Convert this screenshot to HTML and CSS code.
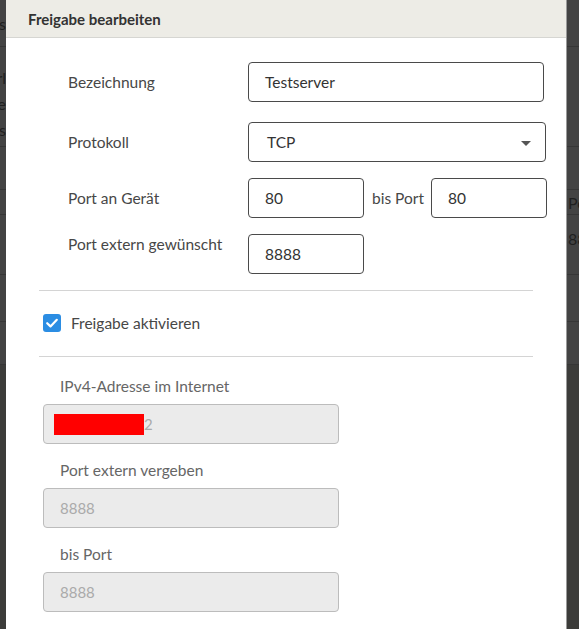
FILE: index.html
```html
<!DOCTYPE html>
<html lang="de">
<head>
<meta charset="utf-8">
<title>Freigabe bearbeiten</title>
<link rel="stylesheet" href="styles.css">
</head>
<body>
<div class="page">
  <div class="bg-table">
    <div class="bg-row h47"><div class="bg-left"><span>Aktions</span></div><div class="bg-mid"></div><div class="bg-right"></div></div>
    <div class="bg-row h100 multi"><div class="bg-left tall"><span class="l1">Testserverl</span><span class="l2">Freigabe</span><span class="l3">Gerätens</span></div><div class="bg-mid"></div><div class="bg-right"></div></div>
    <div class="bg-row h43"><div class="bg-left"></div><div class="bg-mid"></div><div class="bg-right"></div></div>
    <div class="bg-row h25"><div class="bg-left"></div><div class="bg-mid"></div><div class="bg-right"><span>Port</span></div></div>
    <div class="bg-row h60"><div class="bg-left"></div><div class="bg-mid"></div><div class="bg-right top"><span>8888</span></div></div>
    <div class="bg-row h47"><div class="bg-left"></div><div class="bg-mid"></div><div class="bg-right"></div></div>
    <div class="bg-row h43"><div class="bg-left"></div><div class="bg-mid"></div><div class="bg-right"></div></div>
  </div>
  <div class="bg-footer"></div>
</div>

<div class="modal">
  <div class="modal-header">Freigabe bearbeiten</div>
  <div class="modal-body">
    <div class="form-top">
      <div class="row first">
        <label class="label">Bezeichnung</label>
        <div class="field wide">Testserver</div>
      </div>
      <div class="row">
        <label class="label">Protokoll</label>
        <div class="field select">TCP<span class="caret"></span></div>
      </div>
      <div class="row">
        <label class="label">Port an Gerät</label>
        <div class="field port">80</div>
        <span class="inline-label">bis Port</span>
        <div class="field port">80</div>
      </div>
      <div class="row top-align">
        <label class="label">Port extern gewünscht</label>
        <div class="field port">8888</div>
      </div>
    </div>
    <hr class="divider">
    <div class="check-row">
      <span class="checkbox">
        <svg width="18" height="18" viewBox="0 0 18 18"><path d="M4.2 9.2 L7.5 12.4 L13.8 5.8" fill="none" stroke="#fff" stroke-width="2.2" stroke-linecap="round" stroke-linejoin="round"/></svg>
      </span>
      <span class="check-label">Freigabe aktivieren</span>
    </div>
    <hr class="divider">
    <div class="form-bottom">
      <div class="stack">
        <div class="stack-label">IPv4-Adresse im Internet</div>
        <div class="field disabled"><span class="redact"></span>2</div>
      </div>
      <div class="stack">
        <div class="stack-label">Port extern vergeben</div>
        <div class="field disabled">8888</div>
      </div>
      <div class="stack">
        <div class="stack-label">bis Port</div>
        <div class="field disabled">8888</div>
      </div>
    </div>
  </div>
</div>
</body>
</html>
```
FILE: styles.css
```css
* { box-sizing: border-box; }
html, body { margin: 0; padding: 0; }
body {
  width: 579px;
  height: 629px;
  overflow: hidden;
  background: #3c3c3a;
  font-family: Lato, "Open Sans", "Liberation Sans", sans-serif;
  position: relative;
}

/* dimmed background page */
.page { width: 579px; }
.bg-table { background: #434343; }
.bg-row {
  display: flex;
  border-bottom: 1px solid #363636;
  font-size: 16px;
  color: #1f1f1f;
}
.h47 { height: 47px; }
.h100 { height: 100px; }
.h43 { height: 43px; }
.h25 { height: 25px; }
.h60 { height: 60px; }
.bg-left {
  width: 6px;
  overflow: hidden;
  display: flex;
  justify-content: flex-end;
  align-items: center;
  white-space: nowrap;
}
.bg-left.tall {
  flex-direction: column;
  align-items: flex-end;
  justify-content: flex-start;
  padding-top: 18px;
  line-height: 26px;
}
.bg-left.tall span { display: block; }
.bg-mid { width: 560px; }
.bg-right {
  width: 13px;
  overflow: hidden;
  white-space: nowrap;
  display: flex;
  align-items: center;
  padding-left: 2px;
}
.bg-right.top { align-items: flex-start; padding-top: 14px; }
.bg-footer { height: 264px; background: #3c3c3a; }

/* modal */
.modal {
  position: absolute;
  left: 6px;
  top: 0;
  width: 560px;
  height: 629px;
  overflow: hidden;
  background: #fff;
  box-shadow: 1px 0 0 #9a9a9a;
  color: #444;
}
.modal-header {
  height: 38px;
  background: #edece6;
  border-bottom: 1px solid #d6d6d2;
  padding-left: 22px;
  display: flex;
  align-items: center;
  font-size: 15px;
  font-weight: 700;
  color: #333;
}
.form-top {
  padding: 24px 0 0 62px;
  display: flex;
  flex-direction: column;
  gap: 16px;
}
.row {
  display: flex;
  align-items: center;
}
.row.first { margin-bottom: 4px; }
.label {
  width: 180px;
  font-size: 15.5px;
  color: #474747;
}
.row.top-align { align-items: flex-start; }
.row.top-align .label { padding-top: 1px; }
.field {
  height: 40px;
  border: 1px solid #4a4a4a;
  border-radius: 4px;
  display: flex;
  align-items: center;
  padding-left: 16px;
  font-size: 15.5px;
  color: #333;
}
.field.wide { width: 296px; }
.field.select { width: 298px; position: relative; padding-left: 18px; }
.caret {
  position: absolute;
  right: 14px;
  top: 18px;
  width: 0;
  height: 0;
  border-left: 5px solid transparent;
  border-right: 5px solid transparent;
  border-top: 5px solid #555;
}
.field.port { width: 116px; }
.inline-label {
  font-size: 15.5px;
  color: #474747;
  margin: 0 7px 0 8px;
}
.divider {
  margin: 16px 0 0 33px;
  width: 494px;
  border: 0;
  border-top: 1px solid #d4d4d4;
  height: 0;
}
.check-row {
  display: flex;
  align-items: center;
  padding: 23px 0 24px 37px;
}
.check-row + .divider { margin-top: 0; }
.checkbox {
  width: 18px;
  height: 18px;
  border-radius: 3px;
  background: #2b8de3;
  display: block;
}
.checkbox svg { display: block; }
.check-label {
  margin-left: 10px;
  font-size: 15.5px;
  color: #474747;
}
.form-bottom {
  padding: 19px 0 0 37px;
  display: flex;
  flex-direction: column;
  gap: 16px;
}
.stack-label {
  padding-left: 17px;
  height: 20px;
  line-height: 20px;
  font-size: 15.5px;
  color: #666;
  margin-bottom: 8px;
}
.field.disabled {
  width: 296px;
  background: #ebebeb;
  border-color: #bcbcbc;
  color: #aaa;
  font-size: 15px;
  padding-left: 16px;
}
.redact {
  display: block;
  width: 90px;
  height: 21px;
  background: #ff0000;
  margin-left: -6px;
}
```
